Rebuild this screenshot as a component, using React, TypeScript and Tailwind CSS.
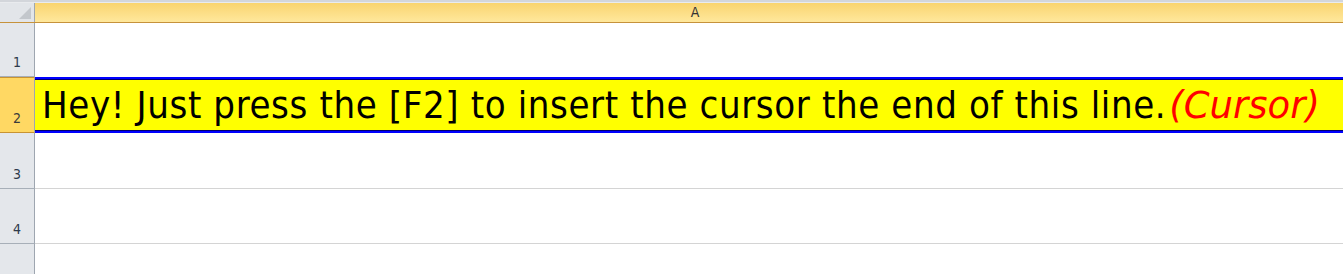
import React from 'react';

const ui = { fontFamily: '"DejaVu Sans Condensed", "DejaVu Sans", sans-serif' };
const wide = { fontFamily: '"DejaVu Sans", sans-serif' };

const RowHead: React.FC<{ n: number; active?: boolean; h: string }> = ({ n, active, h }) => (
  <div
    className={`${h} w-[35px] shrink-0 flex items-end justify-center pb-[7px] text-[14px] leading-none border-r border-[#9ea6b0] ${
      active
        ? 'bg-[#ffd863] text-[#3b3b3b] border-y border-y-[#c89432]'
        : 'bg-[#e4e7eb] text-[#2e3a4b] border-b border-b-[#a7afb8]'
    }`}
    style={ui}
  >
    {n}
  </div>
);

export default function App() {
  return (
    <div className="w-[1343px] h-[274px] overflow-hidden bg-white flex flex-col">
      <div className="h-[3px] shrink-0 bg-[#d3d6db] border-b border-[#e9ebee]" />
      <div className="h-[20px] shrink-0 flex border-b border-[#c6923b]">
        <div className="w-[35px] shrink-0 bg-[#e2e5e9] border-r border-[#9ea6b0] flex items-end justify-end pr-[3px] pb-[3px]">
          <svg width="12" height="12" viewBox="0 0 12 12">
            <polygon points="12,0 12,12 0,12" fill="#c3c7cc" />
          </svg>
        </div>
        <div
          className="flex-1 flex items-center justify-center pl-[12px] text-[14px] text-[#333] bg-gradient-to-b from-[#f9d46f] to-[#ffe89c]"
          style={ui}
        >
          A
        </div>
      </div>

      <div className="flex shrink-0">
        <RowHead n={1} h="h-[54px]" />
        <div className="flex-1 h-[54px]" />
      </div>

      <div className="flex shrink-0">
        <RowHead n={2} active h="h-[56px]" />
        <div className="flex-1 h-[56px] bg-[#ffff00] border-y-2 border-[#0000ff] shadow-[inset_0_1px_0_#00006e,inset_0_-1px_0_#00006e] flex items-center pl-[7px] whitespace-nowrap overflow-hidden">
          <span className="text-[38px] leading-none tracking-[0.6px] text-black" style={ui}>
            Hey! Just press the [F2] to insert the cursor the end of this line.
          </span>
          <span className="text-[37px] leading-none text-[#ff0000] italic ml-[3px]" style={wide}>
            (Cursor)
          </span>
        </div>
      </div>

      <div className="flex shrink-0">
        <RowHead n={3} h="h-[56px]" />
        <div className="flex-1 h-[56px] border-b border-[#d4d4d4]" />
      </div>

      <div className="flex shrink-0">
        <RowHead n={4} h="h-[55px]" />
        <div className="flex-1 h-[55px] border-b border-[#d4d4d4]" />
      </div>

      <div className="flex flex-1">
        <div className="w-[35px] shrink-0 bg-[#e4e7eb] border-r border-[#9ea6b0]" />
        <div className="flex-1" />
      </div>
    </div>
  );
}
